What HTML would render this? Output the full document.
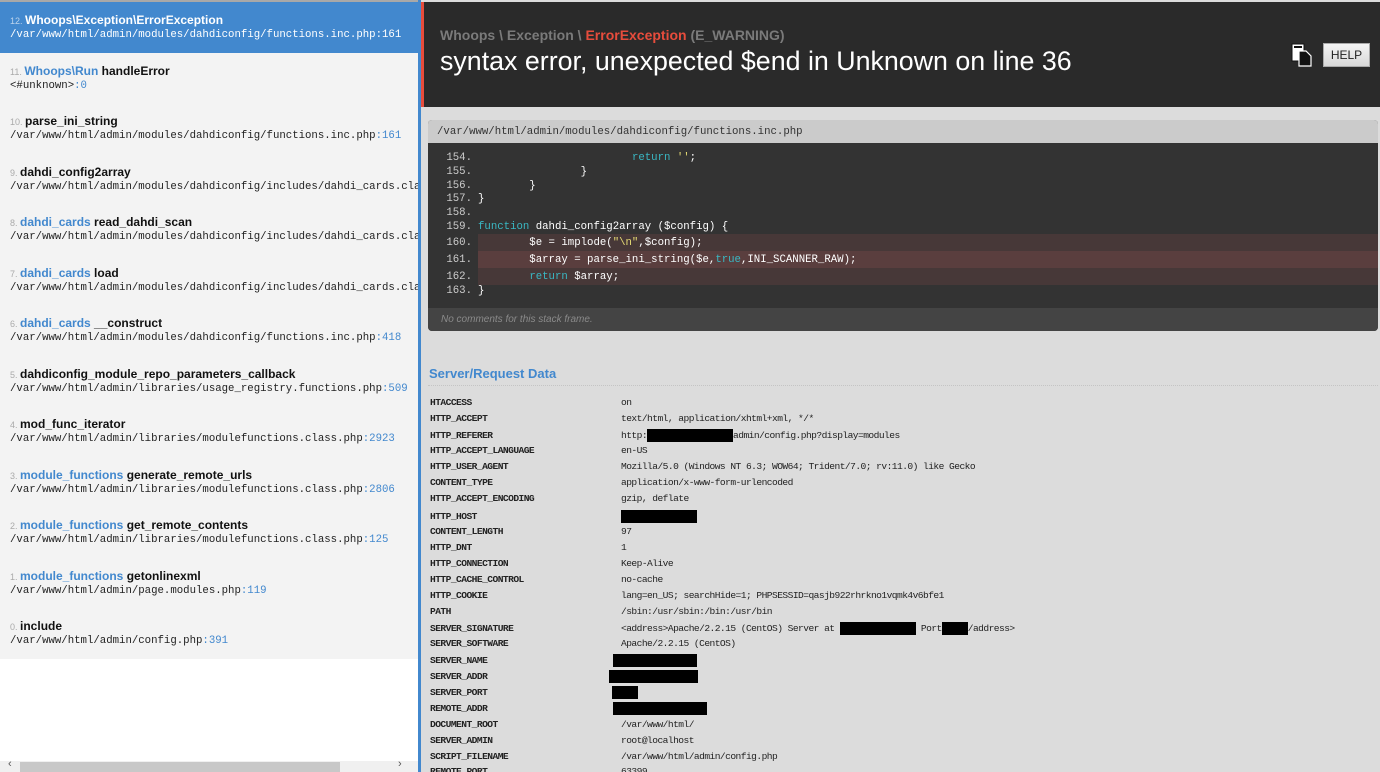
<!DOCTYPE html>
<html><head><meta charset="utf-8"><style>
*{margin:0;padding:0;box-sizing:border-box}
html,body{width:1380px;height:772px;overflow:hidden}
body{background:#dcdcdc;font-family:"Liberation Sans",sans-serif;position:relative}
#left{position:absolute;left:0;top:0;width:418px;height:772px;background:#fff;border-top:2px solid #a8a8a8}
#lstrip{position:absolute;left:418px;top:0;width:3px;height:772px;background:#4288ce}
.fr{height:50.5px;background:#f3f3f3;padding:11px 10px 0;overflow:hidden;white-space:nowrap}
.fr.act{background:#4288ce}
.fr .t{font-size:12px;font-weight:bold;color:#111;line-height:14px}
.fr .n{font-size:9px;color:#aaa;font-weight:normal}
.fr .c{color:#4288ce}
.fr .p{font-size:10.7px;color:#222;line-height:14px;font-family:"Liberation Mono",monospace}
.fr .l{color:#4288ce}
.act .t,.act .c{color:#fff}.act .n{color:#bcd3ec}.act .p,.act .l{color:#fff}
#hdr{position:absolute;left:421px;top:2px;width:959px;height:105px;background:#2a2a2a;border-left:3px solid #e74c3c}
#hdr .cls{position:absolute;left:16px;top:25px;font-size:14px;color:#7a7a7a;font-weight:bold}
#hdr .cls b{color:#e74c3c}
#hdr .msg{position:absolute;left:16px;top:44px;font-size:26.8px;color:#fff}
#help{position:absolute;left:1323px;top:43px;width:47px;height:24px;background:linear-gradient(#f4f4f4,#d8d8d8);border:1px solid #aaa;font-size:12px;color:#222;text-align:center;line-height:22px}
#code{position:absolute;left:428px;top:120px;width:950px;height:211px;border-radius:4px;background:#333;overflow:hidden}
#code .fn{height:23px;background:#cbcbcb;font-size:10.7px;color:#333;padding:6px 9px 0;font-family:"Liberation Mono",monospace}
.cl{position:absolute;left:0;width:100%;font-family:"Liberation Mono",monospace;font-size:10.7px;color:#fff;white-space:pre;height:14px;line-height:14px}
.cl .ln{display:inline-block;width:50px;text-align:right;color:#ccc;padding-right:6px}
.kw{color:#3ab8c4}.st{color:#e6db74}
.hl{position:absolute;left:50px;right:0;height:17px;background:#473838}
.hl2{background:#5a3e3e}
#code .cm{position:absolute;left:0;top:188px;width:100%;height:23px;background:#444;color:#8a8a8a;font-style:italic;font-size:10px;padding:6px 13px}
#sr{position:absolute;left:429px;top:366px;font-size:13px;font-weight:bold;color:#4288ce}
#srl{position:absolute;left:428px;top:385px;width:950px;border-top:1px dotted #c4c4c4}
.row{position:absolute;left:430px;font-family:"Liberation Mono",monospace;font-size:9.6px;letter-spacing:-0.55px;color:#222;white-space:nowrap;height:12px;line-height:12px}
.row b{display:inline-block;width:191px}
.bk{display:inline-block;background:#000;height:13px;vertical-align:middle}
#sb{position:absolute;left:0;top:761px;width:418px;height:11px;background:#f0f0f0}
#sb .th{position:absolute;left:20px;top:1px;width:320px;height:10px;background:#c8c8c8}
</style></head><body>
<div id="left">
<div class="fr act"><div class="t"><span class="n">12. </span><span class="c">Whoops\Exception\ErrorException</span></div><div class="p">/var/www/html/admin/modules/dahdiconfig/functions.inc.php:161</div></div>
<div class="fr"><div class="t"><span class="n">11. </span><span class="c">Whoops\Run</span> handleError</div><div class="p">&lt;#unknown&gt;<span class="l">:0</span></div></div>
<div class="fr"><div class="t"><span class="n">10. </span>parse_ini_string</div><div class="p">/var/www/html/admin/modules/dahdiconfig/functions.inc.php<span class="l">:161</span></div></div>
<div class="fr"><div class="t"><span class="n">9. </span>dahdi_config2array</div><div class="p">/var/www/html/admin/modules/dahdiconfig/includes/dahdi_cards.class.php</div></div>
<div class="fr"><div class="t"><span class="n">8. </span><span class="c">dahdi_cards</span> read_dahdi_scan</div><div class="p">/var/www/html/admin/modules/dahdiconfig/includes/dahdi_cards.class.php</div></div>
<div class="fr"><div class="t"><span class="n">7. </span><span class="c">dahdi_cards</span> load</div><div class="p">/var/www/html/admin/modules/dahdiconfig/includes/dahdi_cards.class.php</div></div>
<div class="fr"><div class="t"><span class="n">6. </span><span class="c">dahdi_cards</span> __construct</div><div class="p">/var/www/html/admin/modules/dahdiconfig/functions.inc.php<span class="l">:418</span></div></div>
<div class="fr"><div class="t"><span class="n">5. </span>dahdiconfig_module_repo_parameters_callback</div><div class="p">/var/www/html/admin/libraries/usage_registry.functions.php<span class="l">:509</span></div></div>
<div class="fr"><div class="t"><span class="n">4. </span>mod_func_iterator</div><div class="p">/var/www/html/admin/libraries/modulefunctions.class.php<span class="l">:2923</span></div></div>
<div class="fr"><div class="t"><span class="n">3. </span><span class="c">module_functions</span> generate_remote_urls</div><div class="p">/var/www/html/admin/libraries/modulefunctions.class.php<span class="l">:2806</span></div></div>
<div class="fr"><div class="t"><span class="n">2. </span><span class="c">module_functions</span> get_remote_contents</div><div class="p">/var/www/html/admin/libraries/modulefunctions.class.php<span class="l">:125</span></div></div>
<div class="fr"><div class="t"><span class="n">1. </span><span class="c">module_functions</span> getonlinexml</div><div class="p">/var/www/html/admin/page.modules.php<span class="l">:119</span></div></div>
<div class="fr"><div class="t"><span class="n">0. </span>include</div><div class="p">/var/www/html/admin/config.php<span class="l">:391</span></div></div>
</div>
<div id="sb"><div class="th"></div><span style="position:absolute;left:8px;top:-3px;font-size:11px;color:#555">‹</span><span style="position:absolute;left:398px;top:-3px;font-size:11px;color:#555">›</span></div>
<div id="lstrip"></div>
<div id="hdr">
<div class="cls">Whoops \ Exception \ <b>ErrorException</b> (E_WARNING)</div>
<div class="msg">syntax error, unexpected $end in Unknown on line 36</div>
</div>
<svg style="position:absolute;left:1290px;top:43px" width="26" height="24" viewBox="0 0 26 24"><rect x="2" y="1" width="12" height="17" fill="#fff" stroke="#111" stroke-width="1"/><rect x="4" y="3" width="8" height="2" fill="#111"/><path d="M9 8h7l5 5v10H9z" fill="#111" stroke="#fff" stroke-width="1.2"/></svg>
<div id="help">HELP</div>
<div id="code">
<div class="fn">/var/www/html/admin/modules/dahdiconfig/functions.inc.php</div>
<div class="hl" style="top:114px"></div>
<div class="hl hl2" style="top:131px"></div>
<div class="hl" style="top:148px"></div>
<div class="cl" style="top:31px"><span class="ln">154.</span>                        <span class="kw">return</span> <span class="st">''</span>;</div>
<div class="cl" style="top:45px"><span class="ln">155.</span>                }</div>
<div class="cl" style="top:59px"><span class="ln">156.</span>        }</div>
<div class="cl" style="top:72px"><span class="ln">157.</span>}</div>
<div class="cl" style="top:86px"><span class="ln">158.</span></div>
<div class="cl" style="top:100px"><span class="ln">159.</span><span class="kw">function</span> dahdi_config2array ($config) {</div>
<div class="cl" style="top:116px"><span class="ln">160.</span>        $e = implode(<span class="st">"\n"</span>,$config);</div>
<div class="cl" style="top:133px"><span class="ln">161.</span>        $array = parse_ini_string($e,<span class="kw">true</span>,INI_SCANNER_RAW);</div>
<div class="cl" style="top:150px"><span class="ln">162.</span>        <span class="kw">return</span> $array;</div>
<div class="cl" style="top:164px"><span class="ln">163.</span>}</div>
<div class="cm">No comments for this stack frame.</div>
</div>
<div id="sr">Server/Request Data</div>
<div id="srl"></div>
<div class="row" style="top:397px"><b>HTACCESS</b>on</div>
<div class="row" style="top:413px"><b>HTTP_ACCEPT</b>text/html, application/xhtml+xml, */*</div>
<div class="row" style="top:429px"><b>HTTP_REFERER</b>http:<span class="bk" style="width:86px"></span>admin/config.php?display=modules</div>
<div class="row" style="top:445px"><b>HTTP_ACCEPT_LANGUAGE</b>en-US</div>
<div class="row" style="top:461px"><b>HTTP_USER_AGENT</b>Mozilla/5.0 (Windows NT 6.3; WOW64; Trident/7.0; rv:11.0) like Gecko</div>
<div class="row" style="top:477px"><b>CONTENT_TYPE</b>application/x-www-form-urlencoded</div>
<div class="row" style="top:493px"><b>HTTP_ACCEPT_ENCODING</b>gzip, deflate</div>
<div class="row" style="top:510px"><b>HTTP_HOST</b><span class="bk" style="width:76px"></span></div>
<div class="row" style="top:526px"><b>CONTENT_LENGTH</b>97</div>
<div class="row" style="top:542px"><b>HTTP_DNT</b>1</div>
<div class="row" style="top:558px"><b>HTTP_CONNECTION</b>Keep-Alive</div>
<div class="row" style="top:574px"><b>HTTP_CACHE_CONTROL</b>no-cache</div>
<div class="row" style="top:590px"><b>HTTP_COOKIE</b>lang=en_US; searchHide=1; PHPSESSID=qasjb922rhrkno1vqmk4v6bfe1</div>
<div class="row" style="top:606px"><b>PATH</b>/sbin:/usr/sbin:/bin:/usr/bin</div>
<div class="row" style="top:622px"><b>SERVER_SIGNATURE</b>&lt;address&gt;Apache/2.2.15 (CentOS) Server at <span class="bk" style="width:76px"></span> Port<span class="bk" style="width:26px"></span>/address&gt;</div>
<div class="row" style="top:638px"><b>SERVER_SOFTWARE</b>Apache/2.2.15 (CentOS)</div>
<div class="row" style="top:654px"><b>SERVER_NAME</b><span class="bk" style="width:84px;margin-left:-8px"></span></div>
<div class="row" style="top:670px"><b>SERVER_ADDR</b><span class="bk" style="width:89px;margin-left:-12px"></span></div>
<div class="row" style="top:686px"><b>SERVER_PORT</b><span class="bk" style="width:26px;margin-left:-9px"></span></div>
<div class="row" style="top:702px"><b>REMOTE_ADDR</b><span class="bk" style="width:94px;margin-left:-8px"></span></div>
<div class="row" style="top:719px"><b>DOCUMENT_ROOT</b>/var/www/html/</div>
<div class="row" style="top:735px"><b>SERVER_ADMIN</b>root@localhost</div>
<div class="row" style="top:751px"><b>SCRIPT_FILENAME</b>/var/www/html/admin/config.php</div>
<div class="row" style="top:766px"><b>REMOTE_PORT</b>63399</div>
</body></html>
